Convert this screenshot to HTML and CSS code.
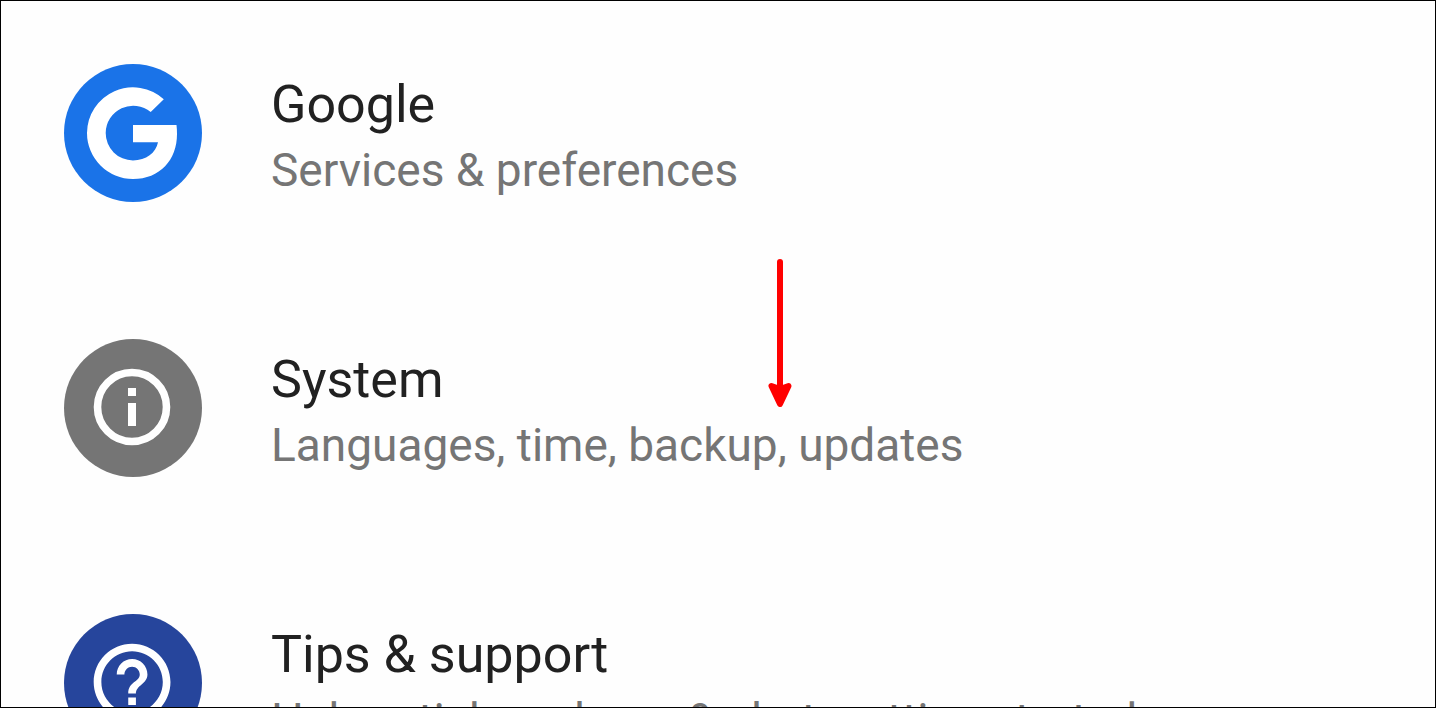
FILE: index.html
```
<!DOCTYPE html>
<html lang="en">
<head>
    <meta charset="UTF-8">
    <meta name="viewport" content="width=device-width, initial-scale=1.0">
    <title>Settings</title>
    <link rel="stylesheet" href="styles.css">
</head>
<body>
    <main class="screen">
        <a class="item" href="#google">
            <svg class="item-icon google" viewBox="0 0 138 138" aria-hidden="true">
                <path fill="#fff" d="M99.800 35.200A46 46 0 0 0 23 69A46 46 0 0 0 69 115C96 115 113 96 113 70C113 67 112.900 64 112.500 61H69V78.300H94C92 89 82 96.500 69 96.500A27.500 27.500 0 0 1 41.700 69A27.500 27.500 0 0 1 86.700 48Z"/>
            </svg>
            <div class="item-text">
                <div class="title">Google</div>
                <div class="summary">Services &amp; preferences</div>
            </div>
        </a>
        <a class="item" href="#system">
            <svg class="item-icon system" viewBox="0 0 138 138" aria-hidden="true">
                <circle cx="68" cy="68" r="34.500" fill="none" stroke="#fff" stroke-width="7.600"/>
                <path fill="#fff" d="M64 49h8v8h-8zM64 64h8v23h-8z"/>
            </svg>
            <div class="item-text">
                <div class="title">System</div>
                <div class="summary">Languages, time, backup, updates</div>
            </div>
        </a>
        <a class="item" href="#tips">
            <svg class="item-icon tips" viewBox="0 0 138 138" aria-hidden="true">
                <path fill="#fff" transform="translate(22 22) scale(3.84)" d="M11 18h2v-2h-2v2zm1-16C6.480 2 2 6.480 2 12s4.480 10 10 10 10-4.480 10-10S17.520 2 12 2zm0 18c-4.410 0-8-3.590-8-8s3.590-8 8-8 8 3.590 8 8-3.590 8-8 8zm0-14c-2.210 0-4 1.790-4 4h2c0-1.100.900-2 2-2s2 .900 2 2c0 2-3 1.750-3 5h2c0-2.250 3-2.500 3-5 0-2.210-1.790-4-4-4z"/>
            </svg>
            <div class="item-text">
                <div class="title">Tips &amp; support</div>
                <div class="summary">Help articles, phone &amp; chat, getting started</div>
            </div>
        </a>

        <svg class="arrow" viewBox="0 0 26 152" aria-hidden="true">
            <path d="M13 5V130" stroke="#f00" stroke-width="6" stroke-linecap="round"/>
            <path d="M4.500 129L13 132L21.500 129L13 147Z" fill="#f00" stroke="#f00" stroke-width="6" stroke-linejoin="round"/>
        </svg>
    </main>
</body>
</html>
```
FILE: styles.css
```
* {
    box-sizing: border-box;
}

body {
    margin: 0;
    background-color: #fefefe;
    font-family: Roboto, Arial, sans-serif;
}

.screen {
    position: relative;
    height: 100vh;
    padding: 63px;
    border: 1px solid #000;
    overflow: hidden;
}

.item {
    display: flex;
    align-items: flex-start;
    gap: 69px;
    margin-bottom: 136px;
    color: inherit;
    text-decoration: none;
}

.item-icon {
    flex: none;
    width: 138px;
    height: 138px;
    border-radius: 50%;
}

.google {
    background-color: #1a73e8;
}

.system {
    background-color: #757575;
}

.tips {
    background-color: #26459c;
}

.item-text {
    padding-top: 9px;
    white-space: nowrap;
}

.title {
    color: #212121;
    font-size: 52px;
    line-height: 64px;
}

.summary {
    color: #757575;
    font-size: 46px;
    line-height: 66px;
}

/* pointer lying over the list */
.arrow {
    position: absolute;
    top: 256px;
    left: 766px;
    width: 26px;
    height: 152px;
}
```
